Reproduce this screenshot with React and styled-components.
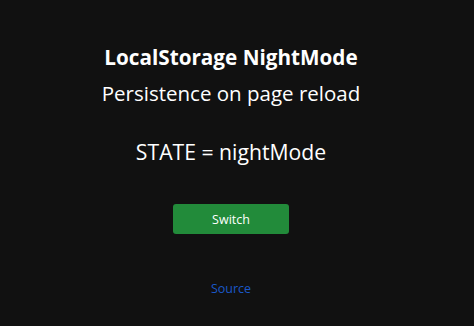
import React from "react";
import styled, { createGlobalStyle } from "styled-components";

const Global = createGlobalStyle`
  html, body { margin: 0; padding: 0; background: #111111; }
  body { font-family: "Open Sans", "Noto Sans", sans-serif; color: #ffffff; }
`;

const Page = styled.main`
  width: 462px;
  height: 326px;
  background: #111111;
  display: flex;
  flex-direction: column;
  align-items: center;
  padding-top: 43px;
  box-sizing: border-box;
`;

const Title = styled.h1`
  margin: 0;
  font-size: 20.7px;
  font-weight: 700;
  line-height: 28px;
`;

const Subtitle = styled.h2`
  margin: 8px 0 0;
  font-size: 20.5px;
  font-weight: 400;
  line-height: 28px;
`;

const State = styled.p`
  margin: 31px 0 0;
  font-size: 21.2px;
  line-height: 28px;
`;

const Button = styled.button`
  margin-top: 38px;
  width: 116px;
  height: 30px;
  border: none;
  border-radius: 3px;
  background: #228b3a;
  color: #ffffff;
  font-family: inherit;
  font-size: 12.5px;
  cursor: pointer;
`;

const Link = styled.a`
  margin-top: 46px;
  font-size: 12.5px;
  color: #1a58c8;
  text-decoration: none;
`;

export default function App() {
  return (
    <>
      <Global />
      <Page>
        <Title>LocalStorage NightMode</Title>
        <Subtitle>Persistence on page reload</Subtitle>
        <State>STATE = nightMode</State>
        <Button>Switch</Button>
        <Link href="#">Source</Link>
      </Page>
    </>
  );
}
